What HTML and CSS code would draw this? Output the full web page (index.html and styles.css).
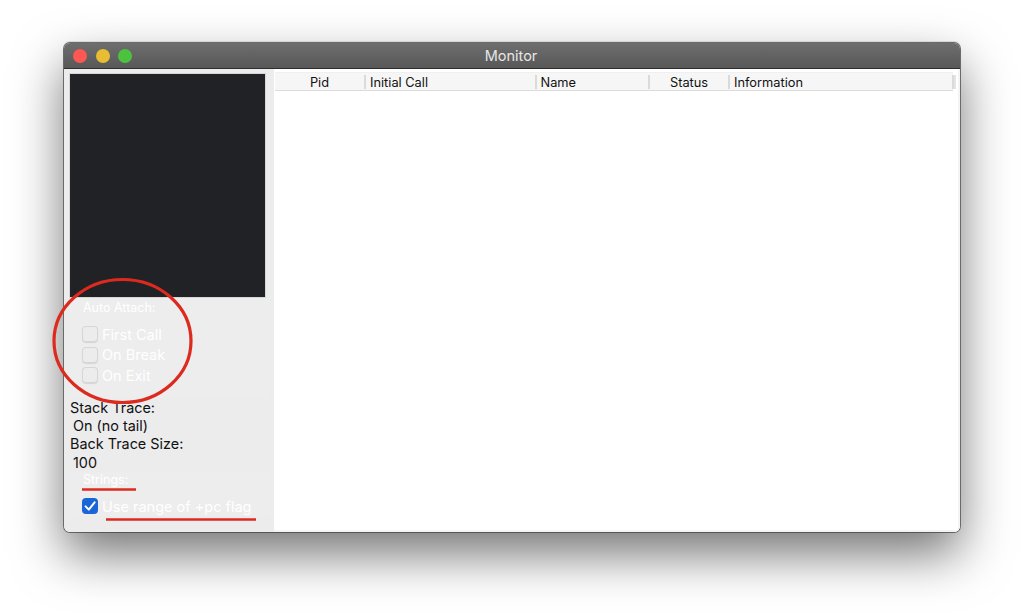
FILE: index.html
```html
<!DOCTYPE html>
<html lang="en">
<head>
<meta charset="utf-8">
<title>Monitor</title>
<link rel="stylesheet" href="styles.css">
</head>
<body>
<div class="window">
  <header class="titlebar">
    <div class="lights">
      <span class="light red"></span>
      <span class="light yellow"></span>
      <span class="light green"></span>
    </div>
    <div class="title">Monitor</div>
  </header>
  <div class="content">
    <aside class="sidebar">
      <div class="canvas"></div>
      <section class="group auto">
        <div class="legend">Auto Attach:</div>
        <label class="check"><span class="box"></span><span>First Call</span></label>
        <label class="check"><span class="box"></span><span>On Break</span></label>
        <label class="check"><span class="box"></span><span>On Exit</span></label>
      </section>
      <div class="info">
        <div>Stack Trace:</div>
        <div class="value">On (no tail)</div>
        <div>Back Trace Size:</div>
        <div class="value">100</div>
      </div>
      <section class="group strings">
        <div class="legend">Strings:</div>
        <label class="check flag">
          <span class="box on"><svg viewBox="0 0 16 16" width="16" height="16"><path d="M3.6 8.400 L6.800 11.600 L12.600 4.400" fill="none" stroke="#fff" stroke-width="2" stroke-linecap="round" stroke-linejoin="round"/></svg></span>
          <span>Use range of +pc flag</span>
        </label>
      </section>
    </aside>
    <main class="table">
      <div class="thead">
        <div class="th c-pid center">Pid</div>
        <div class="th c-call">Initial Call</div>
        <div class="th c-name">Name</div>
        <div class="th c-status center">Status</div>
        <div class="th c-info">Information</div>
        <div class="th c-end"></div>
      </div>
    </main>
  </div>
</div>
<svg class="marks" width="1024" height="616" viewBox="0 0 1024 616">
  <ellipse cx="122.500" cy="341" rx="68.500" ry="61.500" fill="none" stroke="#dd2a1f" stroke-width="3.200"/>
  <path d="M82 489.500 H136" stroke="#dd2a1f" stroke-width="2.500" fill="none"/>
  <path d="M106 519.500 H256" stroke="#dd2a1f" stroke-width="2.500" fill="none"/>
</svg>
</body>
</html>
```
FILE: styles.css
```css
html, body {
  margin: 0;
  height: 616px;
  overflow: hidden;
  background: #fff;
}
body {
  position: relative;
  padding: 43px 64px 0;
  box-sizing: border-box;
  font-family: Inter, "Liberation Sans", sans-serif;
  font-size: 13px;
  color: #111;
}
.window {
  height: 489px;
  display: flex;
  flex-direction: column;
  border-radius: 6px;
  overflow: hidden;
  background: #ececec;
  box-shadow: 0 0 0 1px rgba(60,60,60,.7), 0 -1px 0 1px #d8d8d8, 0 22px 50px rgba(0,0,0,.55);
}
.titlebar {
  position: relative;
  height: 26px;
  flex: none;
  display: flex;
  align-items: center;
  justify-content: center;
  padding-right: 2px;
  background: linear-gradient(#6e6e6e, #585858);
  border-bottom: 1px solid #2e2e2e;
  box-sizing: border-box;
}
.lights {
  position: absolute;
  left: 9px;
  top: 6px;
  display: flex;
  gap: 8.500px;
}
.light {
  width: 14px;
  height: 14px;
  border-radius: 50%;
}
.red { background: #fc5753; }
.yellow { background: #e9bd33; }
.green { background: #4cc33e; }
.title {
  color: #e6e6e6;
  font-size: 14.500px;
}
.content {
  flex: 1;
  display: flex;
  min-height: 0;
}
.sidebar {
  width: 210px;
  flex: none;
  padding: 4px 0 0 5px;
  box-sizing: border-box;
  background: #ececec;
}
.canvas {
  width: 197px;
  height: 225px;
  box-sizing: border-box;
  background: #212226;
  border: 1px solid #d6d6d6;
}
.group {
  color: #fff;
  font-size: 14px;
  padding-left: 13px;
  background: #ededed;
  margin-right: 4px;
}
.auto {
  height: 100px;
  padding-top: 3px;
  box-sizing: border-box;
  margin-bottom: 1px;
}
.legend {
  font-size: 12.500px;
  line-height: 14px;
  padding-left: 1px;
}
.auto .legend {
  margin-bottom: 9px;
}
.check {
  display: flex;
  align-items: center;
  gap: 4px;
  height: 20.500px;
  font-size: 14.500px;
}
.box {
  width: 16px;
  height: 16px;
  border-radius: 4px;
  background: #ececec;
  box-shadow: inset 0 0 0 1px #d6d6d6, 0 1px 1px rgba(0,0,0,.1);
  flex: none;
}
.box.on {
  background: #1b66d6;
  box-shadow: none;
}
.box svg { display: block; }
.info {
  font-size: 14.400px;
  line-height: 18.200px;
  color: #111;
  padding-left: 1px;
}
.value { padding-left: 3px; }
.strings {
  padding-top: 1px;
}
.flag {
  margin-top: 9px;
}
.table {
  flex: 1;
  background: #fff;
  padding: 3px 5px 0 1px;
  border-bottom: 2px solid #f4f4f4;
  border-right: 2px solid #f4f4f4;
  min-width: 0;
}
.thead {
  height: 16px;
  padding-top: 1px;
  display: flex;
  align-items: center;
  background: #f6f6f6;
  border-bottom: 1px solid #dcdcdc;
  border-top: 1px solid #f0f0f0;
}
.th {
  height: 14px;
  line-height: 16px;
  font-size: 12.800px;
  color: #111;
  box-sizing: border-box;
  border-right: 2px solid #dadada;
  padding-left: 4px;
  flex: none;
}
.center { text-align: center; padding-left: 0; }
.c-pid { width: 91px; }
.c-call { width: 170.500px; }
.c-name { width: 113.500px; }
.c-status { width: 80px; }
.c-info { width: 224px; }
.c-end { width: 2px; padding: 0; border-right: 0; border-left: 0; background: #e4e4e4; }
.marks {
  position: absolute;
  left: 0;
  top: 0;
  pointer-events: none;
}
```
